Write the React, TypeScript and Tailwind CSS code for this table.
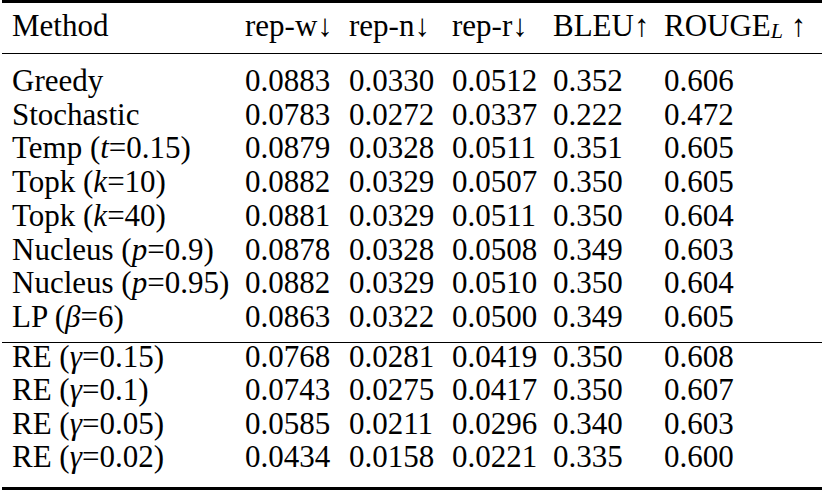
import React from 'react';

type Row = {
  method: React.ReactNode;
  values: string[];
};

const baseRows: Row[] = [
  { method: 'Greedy', values: ['0.0883', '0.0330', '0.0512', '0.352', '0.606'] },
  { method: 'Stochastic', values: ['0.0783', '0.0272', '0.0337', '0.222', '0.472'] },
  { method: <>Temp (<i>t</i>=0.15)</>, values: ['0.0879', '0.0328', '0.0511', '0.351', '0.605'] },
  { method: <>Topk (<i>k</i>=10)</>, values: ['0.0882', '0.0329', '0.0507', '0.350', '0.605'] },
  { method: <>Topk (<i>k</i>=40)</>, values: ['0.0881', '0.0329', '0.0511', '0.350', '0.604'] },
  { method: <>Nucleus (<i>p</i>=0.9)</>, values: ['0.0878', '0.0328', '0.0508', '0.349', '0.603'] },
  { method: <>Nucleus (<i>p</i>=0.95)</>, values: ['0.0882', '0.0329', '0.0510', '0.350', '0.604'] },
  { method: <>LP (<i>β</i>=6)</>, values: ['0.0863', '0.0322', '0.0500', '0.349', '0.605'] },
];

const reRows: Row[] = [
  { method: <>RE (<i>γ</i>=0.15)</>, values: ['0.0768', '0.0281', '0.0419', '0.350', '0.608'] },
  { method: <>RE (<i>γ</i>=0.1)</>, values: ['0.0743', '0.0275', '0.0417', '0.350', '0.607'] },
  { method: <>RE (<i>γ</i>=0.05)</>, values: ['0.0585', '0.0211', '0.0296', '0.340', '0.603'] },
  { method: <>RE (<i>γ</i>=0.02)</>, values: ['0.0434', '0.0158', '0.0221', '0.335', '0.600'] },
];

// same column template for header and body so the cells line up
const cols = 'grid grid-cols-[233px_104px_103px_101px_111px_1fr] pl-[10px] leading-[27px] whitespace-nowrap';

function TableRow({ row, tall }: { row: Row; tall?: boolean }) {
  return (
    <div className={`${cols} ${tall ? 'h-[33.7px]' : 'h-[33.3px]'}`}>
      <div>{row.method}</div>
      {row.values.map((v, i) => (
        <div key={i}>{v}</div>
      ))}
    </div>
  );
}

export default function App() {
  return (
    <div className="w-[825px] h-[492px] bg-white text-black overflow-hidden font-['Liberation_Serif','Times_New_Roman',serif] text-[31px]">
      <div className="ml-[2px] w-[820px]">
        <div className="h-[2.5px] bg-black" />

        <div className={`${cols} h-[33.5px] mt-[9.6px]`}>
          <div>Method</div>
          <div>rep-w↓</div>
          <div>rep-n↓</div>
          <div>rep-r↓</div>
          <div>BLEU↑</div>
          <div>
            ROUGE<sub className="italic text-[22px] relative -bottom-[2px]">L</sub> ↑
          </div>
        </div>

        <div className="h-[1.5px] bg-black mt-[7.4px]" />

        <div className="mt-[12.6px]">
          {baseRows.map((r, i) => (
            <TableRow key={i} row={r} tall />
          ))}
        </div>

        <div className="h-[1.5px] bg-black mt-[5px]" />

        <div>
          {reRows.map((r, i) => (
            <TableRow key={i} row={r} />
          ))}
        </div>

        <div className="h-[3px] bg-black mt-[10.4px]" />
      </div>
    </div>
  );
}
